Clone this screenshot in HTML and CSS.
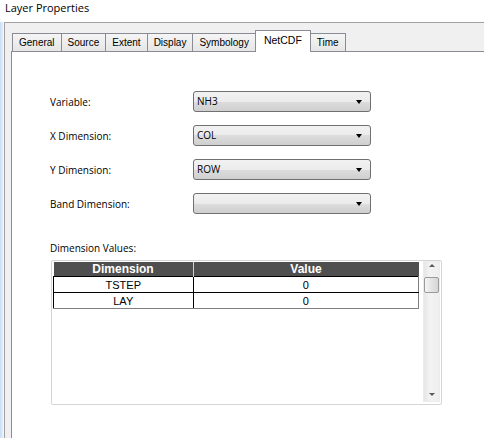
FILE: index.html
```html
<!DOCTYPE html>
<html lang="en">
<head>
  <meta charset="UTF-8" />
  <title>Layer Properties</title>
  <link rel="stylesheet" href="styles.css">
</head>
<body>
  <div class="window">
    <div class="title">Layer Properties</div>

    <div class="frame">
      <!-- Tabs -->
      <div class="tabs">
        <div class="tab">General</div>
        <div class="tab">Source</div>
        <div class="tab">Extent</div>
        <div class="tab">Display</div>
        <div class="tab">Symbology</div>
        <div class="tab active">NetCDF</div>
        <div class="tab">Time</div>
      </div>

      <!-- NetCDF page -->
      <div class="panel">
        <div class="fields">
          <label>Variable:</label>
          <div class="combo"><span>NH3</span><i class="arrow"></i></div>
          <label>X Dimension:</label>
          <div class="combo"><span>COL</span><i class="arrow"></i></div>
          <label>Y Dimension:</label>
          <div class="combo"><span>ROW</span><i class="arrow"></i></div>
          <label>Band Dimension:</label>
          <div class="combo"><span></span><i class="arrow"></i></div>
        </div>

        <div class="dv-label">Dimension Values:</div>
        <div class="grid-box">
          <table class="grid">
            <thead>
              <tr><th class="col-dim">Dimension</th><th>Value</th></tr>
            </thead>
            <tbody>
              <tr><td>TSTEP</td><td>0</td></tr>
              <tr><td>LAY</td><td>0</td></tr>
            </tbody>
          </table>
          <div class="vscroll">
            <div class="sb-btn up"><i></i></div>
            <div class="sb-thumb"></div>
            <div class="sb-track"></div>
            <div class="sb-btn down"><i></i></div>
          </div>
        </div>
      </div>
    </div>
  </div>
</body>
</html>
```

FILE: styles.css
```css
/* Base */
html, body {
  margin: 0; padding: 0;
  height: 100%;
  overflow: hidden;
  background: #fff;
  color: #000;
  font-family: "Open Sans", "Noto Sans", sans-serif;
}
.window {
  height: 438px;
  display: flex;
  flex-direction: column;
  padding-left: 4px;
  box-sizing: border-box;
  background: linear-gradient(90deg, #c9def3 0, #e4eff9 3px, transparent 4px) 0 22px / 4px 100% no-repeat;
}
.title {
  height: 22px;
  padding-left: 1px;
  font-size: 11px;
  line-height: 16px;
}

/* Dialog frame */
.frame {
  flex: 1;
  display: flex;
  flex-direction: column;
  background: #f0f0f0;
  border-left: 1px solid #a0a0a0;
  border-top: 1px solid #a0a0a0;
  padding: 7px 0 0 6px;
}

/* Tabs */
.tabs {
  display: flex;
  align-items: flex-end;
  height: 21px;
  padding-left: 1px;
}
.tab {
  height: 18px;
  box-sizing: border-box;
  padding: 0 6px;
  font-family: "Liberation Sans", Arial, sans-serif;
  font-size: 10px;
  line-height: 17px;
  border: 1px solid #898c95;
  border-bottom: none;
  border-left: none;
  background: linear-gradient(#f5f5f5, #e6e6e6);
}
.tab:first-child {
  border-left: 1px solid #898c95;
}
.tab.active {
  position: relative;
  z-index: 1;
  height: 22px;
  margin-bottom: -1px;
  margin-left: -1px;
  border-left: 1px solid #898c95;
  background: #fff;
  padding: 0 8px;
  font-size: 10.5px;
  line-height: 18px;
}

/* Tab page */
.panel {
  flex: 1;
  background: #fff;
  border-left: 1px solid #898c95;
  border-top: 1px solid #898c95;
  padding: 39px 0 0 38px;
  font-size: 10px;
}
.fields {
  display: grid;
  grid-template-columns: 143px 178px;
  grid-auto-rows: 21px;
  row-gap: 13px;
  align-items: center;
}
.combo {
  position: relative;
  height: 21px;
  box-sizing: border-box;
  border: 1px solid #707070;
  border-radius: 3px;
  background: linear-gradient(#f2f2f2 0%, #ebebeb 50%, #dddddd 50%, #cfcfcf 100%);
  padding-left: 3px;
  line-height: 18px;
}
.combo .arrow {
  position: absolute;
  right: 8px;
  top: 8px;
  width: 0; height: 0;
  border-left: 3.5px solid transparent;
  border-right: 3.5px solid transparent;
  border-top: 4px solid #000;
}

/* Dimension values grid */
.dv-label {
  margin-top: 27px;
  line-height: 14px;
}
.grid-box {
  display: flex;
  gap: 4px;
  width: 391px;
  height: 145px;
  box-sizing: border-box;
  margin: 5px 0 0 1px;
  padding: 0 1px 2px 1px;
  border: 1px solid #d5d5d5;
  border-radius: 2px;
}
.grid {
  width: 366px;
  height: 47px;
  margin-top: 1px;
  border-collapse: collapse;
  font-family: "Liberation Sans", Arial, sans-serif;
  text-align: center;
}
.grid th {
  height: 14px;
  padding: 0;
  background: #4f4f4f;
  color: #fff;
  font-size: 12px;
  font-weight: bold;
  line-height: 13px;
  border-left: 1px solid #d0d0d0;
}
.grid th.col-dim {
  width: 139px;
  border-left: none;
}
.grid td {
  height: 15px;
  padding: 0;
  font-size: 11px;
  line-height: 14px;
  border: 1px solid #000;
}
.grid tbody tr:last-child td {
  border-bottom-color: #808080;
}
.grid td:last-child {
  border-right-color: #808080;
}

/* Scrollbar */
.vscroll {
  width: 17px;
  height: 141px;
  display: flex;
  flex-direction: column;
  box-sizing: border-box;
  background: linear-gradient(90deg, #e6e6e6, #f3f3f3 40%, #eeeeee);
  border: 1px solid #ececec;
}
.sb-btn {
  height: 15px;
  display: flex;
  justify-content: center;
}
.sb-btn i {
  width: 0; height: 0;
  border-left: 3.5px solid transparent;
  border-right: 3.5px solid transparent;
}
.sb-btn.up { align-items: flex-start; }
.sb-btn.up i {
  margin-top: 2px;
  border-bottom: 3px solid #5a5a5a;
}
.sb-btn.down { align-items: flex-end; }
.sb-btn.down i {
  margin-bottom: 5px;
  border-top: 3px solid #5a5a5a;
}
.sb-thumb {
  height: 16px;
  box-sizing: border-box;
  border: 1px solid #9a9a9a;
  border-radius: 2px;
  background: linear-gradient(90deg, #f4f4f4, #e4e4e4 50%, #d6d6d6);
}
.sb-track {
  flex: 1;
}
```
